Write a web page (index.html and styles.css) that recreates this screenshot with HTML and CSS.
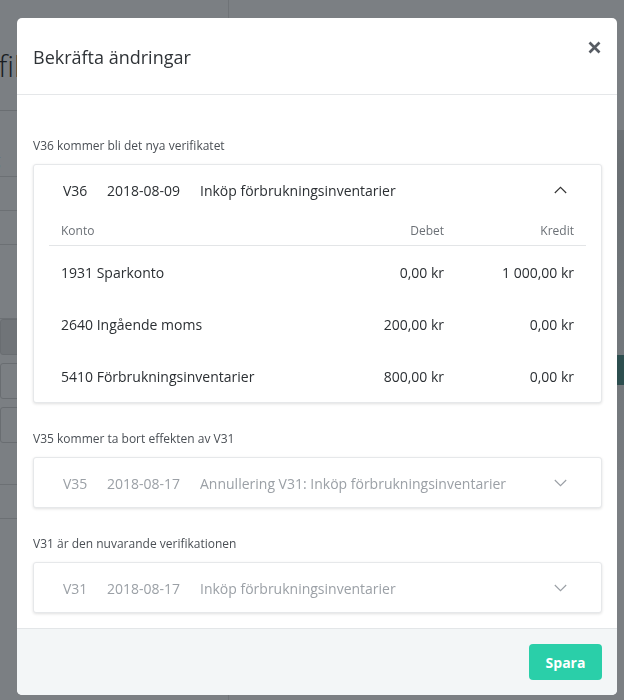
FILE: index.html
```html
<!DOCTYPE html>
<html lang="sv">
<head>
<meta charset="utf-8">
<title>Bekräfta ändringar</title>
<link rel="stylesheet" href="styles.css">
</head>
<body>
<div class="page">
  <div class="page-side">
    <div class="page-title">Verifikat</div>
    <div class="page-line"></div>
    <div class="page-row">Händelsebeskrivning</div>
    <div class="page-row"></div>
    <div class="page-row"></div>
    <div class="page-row page-row-tall"></div>
    <div class="page-box page-box-dark"></div>
    <div class="page-box"></div>
    <div class="page-box"></div>
    <div class="page-row">Kvitton</div>
    <div class="page-row"></div>
  </div>
  <div class="page-media">
    <div class="media-shape"></div>
  </div>
</div>

<div class="backdrop">
  <div class="modal">
    <div class="modal-header">
      <h2 class="modal-title">Bekräfta ändringar</h2>
      <button class="close" aria-label="Stäng">
        <svg width="13" height="13" viewBox="0 0 13 13"><path d="M1.5 1.5 L11.5 11.5 M11.5 1.5 L1.5 11.5" stroke="#575c63" stroke-width="2.7" stroke-linecap="butt" fill="none"/></svg>
      </button>
    </div>

    <div class="modal-body">
      <div class="section">
        <div class="section-label">V36 kommer bli det nya verifikatet</div>
        <div class="card">
          <div class="card-head">
            <span class="v-no">V36</span>
            <span class="v-date">2018-08-09</span>
            <span class="v-desc">Inköp förbrukningsinventarier</span>
            <svg class="chev" width="13" height="8" viewBox="0 0 13 8"><polyline points="0.8,7 6.5,1.3 12.2,7" fill="none" stroke="#333" stroke-width="1.1"/></svg>
          </div>
          <div class="ledger">
            <div class="ledger-row ledger-headrow">
              <span>Konto</span><span class="num">Debet</span><span class="num">Kredit</span>
            </div>
            <div class="ledger-row">
              <span>1931 Sparkonto</span><span class="num">0,00 kr</span><span class="num">1 000,00 kr</span>
            </div>
            <div class="ledger-row">
              <span>2640 Ingående moms</span><span class="num">200,00 kr</span><span class="num">0,00 kr</span>
            </div>
            <div class="ledger-row">
              <span>5410 Förbrukningsinventarier</span><span class="num">800,00 kr</span><span class="num">0,00 kr</span>
            </div>
          </div>
        </div>
      </div>

      <div class="section">
        <div class="section-label">V35 kommer ta bort effekten av V31</div>
        <div class="card card-muted">
          <div class="card-head">
            <span class="v-no">V35</span>
            <span class="v-date">2018-08-17</span>
            <span class="v-desc">Annullering V31: Inköp förbrukningsinventarier</span>
            <svg class="chev" width="13" height="8" viewBox="0 0 13 8"><polyline points="0.8,1 6.5,6.7 12.2,1" fill="none" stroke="#9a9fa5" stroke-width="1.1"/></svg>
          </div>
        </div>
      </div>

      <div class="section">
        <div class="section-label">V31 är den nuvarande verifikationen</div>
        <div class="card card-muted">
          <div class="card-head">
            <span class="v-no">V31</span>
            <span class="v-date">2018-08-17</span>
            <span class="v-desc">Inköp förbrukningsinventarier</span>
            <svg class="chev" width="13" height="8" viewBox="0 0 13 8"><polyline points="0.8,1 6.5,6.7 12.2,1" fill="none" stroke="#9a9fa5" stroke-width="1.1"/></svg>
          </div>
        </div>
      </div>
    </div>

    <div class="modal-footer">
      <button class="btn-save">Spara</button>
    </div>
  </div>
</div>
</body>
</html>
```

FILE: styles.css
```css
* { box-sizing: border-box; }

html, body {
  margin: 0;
  padding: 0;
  height: 100%;
}

body {
  font-family: "Open Sans", "Liberation Sans", sans-serif;
  background: #ffffff;
  overflow: hidden;
}

/* ---------- underlying page ---------- */
.page {
  display: flex;
  height: 100%;
}

.page-side {
  width: 283px;
  margin-left: -54px;
  padding-top: 46px;
  border-right: 1px solid #e4e4e4;
}

.page-title {
  font-size: 30px;
  font-weight: 300;
  color: #222;
  line-height: 40px;
  height: 64px;
}

.page-line {
  border-top: 1px solid #d8d8d8;
  height: 33px;
}

.page-row {
  height: 34px;
  border-bottom: 1px solid #dcdcdc;
  font-size: 14px;
  line-height: 34px;
  color: #333;
  text-indent: -82px;
}

.page-row-tall {
  height: 74px;
}

.page-box {
  height: 36px;
  margin: 8px 0 8px 54px;
  border: 1px solid #d6d6d6;
  border-radius: 3px;
  background: #fff;
}

.page-box-dark {
  background: #e6e6e6;
  margin-top: 0;
}

.page-media {
  flex: 1;
  background: linear-gradient(160deg, #f2f2f2 0%, #d9dcdc 40%, #e9ecec 70%, #f5f5f5 100%);
  margin: 130px 0 230px;
}

.media-shape {
  width: 20px;
  height: 30px;
  margin: 225px 0 0 auto;
  background: #4f8f8a;
}

/* ---------- overlay / modal ---------- */
.backdrop {
  position: fixed;
  inset: 0;
  background: rgba(20, 26, 34, 0.56);
}

.modal {
  margin: 18px 0 0 17px;
  width: 600px;
  background: #fff;
  border-radius: 5px;
  overflow: hidden;
}

.modal-header {
  height: 77px;
  border-bottom: 1px solid #e5e7e9;
  display: flex;
  align-items: center;
  padding: 0 16px;
}

.modal-title {
  margin: 0;
  margin-top: 1px;
  font-size: 18px;
  font-weight: 400;
  color: #2f3337;
}

.close {
  margin-left: auto;
  align-self: flex-start;
  margin-top: 23px;
  background: none;
  border: 0;
  padding: 0;
  width: 13px;
  height: 13px;
  cursor: pointer;
}

.close svg { display: block; }

.modal-body {
  padding: 42px 15px 15px 16px;
}

.section + .section {
  margin-top: 27px;
}

.section-label {
  font-size: 12px;
  line-height: 17px;
  color: #4a4f55;
  margin-bottom: 10px;
}

.card {
  border: 1px solid #e6e8ea;
  border-radius: 3px;
  box-shadow: 0 1px 3px rgba(0, 0, 0, 0.12);
  background: #fff;
}

.card-head {
  height: 49px;
  display: flex;
  align-items: center;
  padding: 1px 34px 0 29px;
  font-size: 14px;
  color: #2b2f33;
}

.v-no { width: 44px; }
.v-date { width: 93px; }
.v-desc { flex: 1; }

.chev { display: block; }

.card-muted .card-head {
  color: #9ba0a6;
}

.ledger {
  padding: 0 15px;
}

.ledger-row {
  display: grid;
  grid-template-columns: 1fr 130px 130px;
  align-items: center;
  height: 52px;
  padding: 0 12px;
  font-size: 14px;
  color: #2b2f33;
}

.ledger-headrow {
  height: 32px;
  font-size: 12px;
  color: #6b7076;
  border-bottom: 1px solid #e3e5e7;
  padding-top: 1px;
}

.num { text-align: right; }

.modal-footer {
  background: #f3f6f7;
  border-top: 1px solid #e3e6e8;
  height: 67px;
  display: flex;
  justify-content: flex-end;
  align-items: flex-start;
  padding: 15px 15px 0 0;
}

.btn-save {
  width: 73px;
  height: 36px;
  border: 0;
  border-radius: 4px;
  background: #2acfa9;
  color: #fff;
  font-family: "Open Sans", "Liberation Sans", sans-serif;
  font-size: 14px;
  font-weight: 700;
  cursor: pointer;
}
```
